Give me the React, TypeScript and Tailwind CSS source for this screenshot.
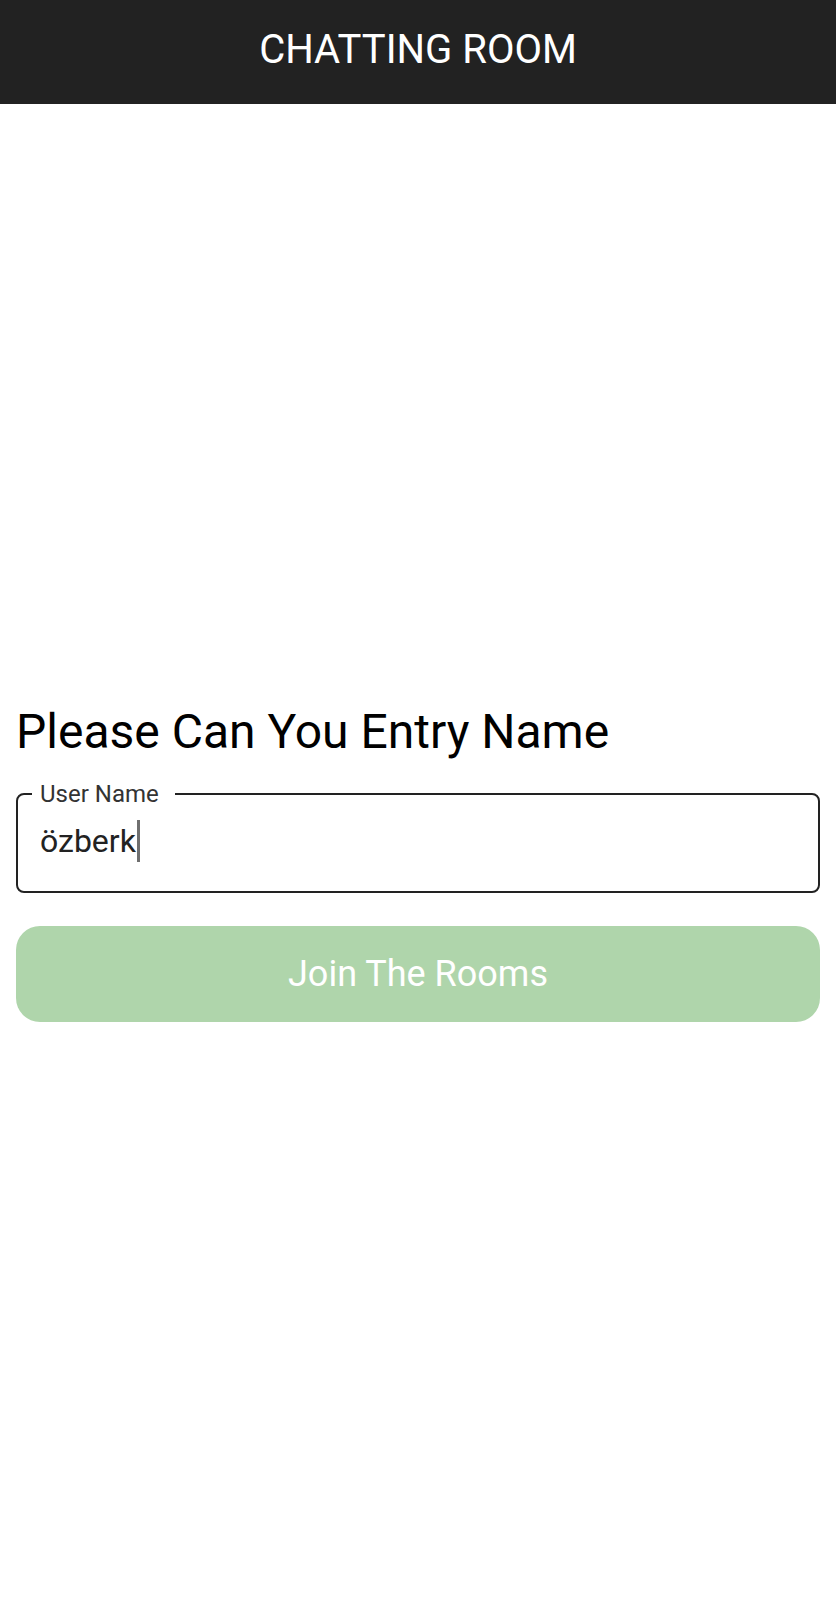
import React from "react";

export default function App() {
  return (
    <div className="min-h-screen flex flex-col bg-white font-['Roboto',sans-serif]">
      {/* App bar */}
      <header className="h-[104px] bg-[#222222] flex items-center justify-center pb-[6px]">
        <h1 className="text-[40px] leading-[47px] text-white">CHATTING ROOM</h1>
      </header>

      {/* Login form */}
      <main className="flex-1 flex flex-col justify-center px-4 pt-[6px]">
        <h2 className="text-[48px] leading-[56px] text-black">
          Please Can You Entry Name
        </h2>

        <fieldset className="mt-[21px] border-2 border-[#222222] rounded-lg px-[22px] pt-[14px] pb-[30px]">
          <legend className="-ml-2 pl-2 pr-4 text-[24px] leading-[26px] text-[#333333]">
            User Name
          </legend>
          <div className="flex items-center h-[40px] text-[32px] text-[#222222]">
            <span>özberk</span>
            <span className="ml-px w-[3px] h-[42px] bg-[#6f6f6f]" />
          </div>
        </fieldset>

        <button className="mt-[33px] h-[96px] w-full rounded-3xl bg-[#afd5ab] text-[36px] text-white">
          Join The Rooms
        </button>
      </main>
    </div>
  );
}
